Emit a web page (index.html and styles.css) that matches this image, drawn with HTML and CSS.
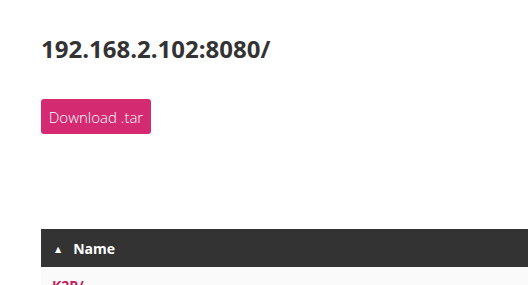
FILE: index.html
```html
<!DOCTYPE html>
<html>
<head>
<meta charset="utf-8">
<link rel="stylesheet" href="styles.css">
</head>
<body>
<main class="page">
  <h1 class="title">192.168.2.102:8080/</h1>
  <a class="btn" href="#">Download .tar</a>
  <table class="listing">
    <thead>
      <tr><th class="name-col"><span class="arrow">▲</span>Name</th></tr>
    </thead>
    <tbody>
      <tr><td class="name-cell"><a href="#">K2P/</a></td></tr>
    </tbody>
  </table>
</main>
</body>
</html>
```
FILE: styles.css
```css
html, body {
  margin: 0;
  padding: 0;
  background: #fff;
  overflow: hidden;
}
body {
  font-family: "Open Sans", "DejaVu Sans", sans-serif;
  color: #333;
}
.page {
  padding: 33px 0 0 41px;
}
.title {
  margin: 0;
  font-size: 24px;
  font-weight: 700;
  line-height: 32px;
  color: #333;
}
.btn {
  display: inline-block;
  margin-top: 34px;
  width: 110px;
  height: 35px;
  box-sizing: border-box;
  background: #d42a72;
  color: #fff;
  border-radius: 3px;
  text-decoration: none;
  font-size: 15px;
  font-weight: 300;
  line-height: 37px;
  text-align: center;
}
.listing {
  display: table;
  margin-top: 95px;
  width: 100%;
  border-collapse: collapse;
}
.listing th {
  background: #333;
  color: #fff;
  text-align: left;
  height: 38px;
  padding: 0 0 0 14px;
  font-size: 14px;
  font-weight: 700;
}
.arrow {
  font-size: 8px;
  margin-right: 12px;
  vertical-align: 2px;
}
.listing td {
  background: #fafafa;
  padding: 9px 0 8px 11px;
  font-size: 14px;
  font-weight: 700;
}
.listing td a {
  color: #c81e5f;
  text-decoration: none;
}
```
